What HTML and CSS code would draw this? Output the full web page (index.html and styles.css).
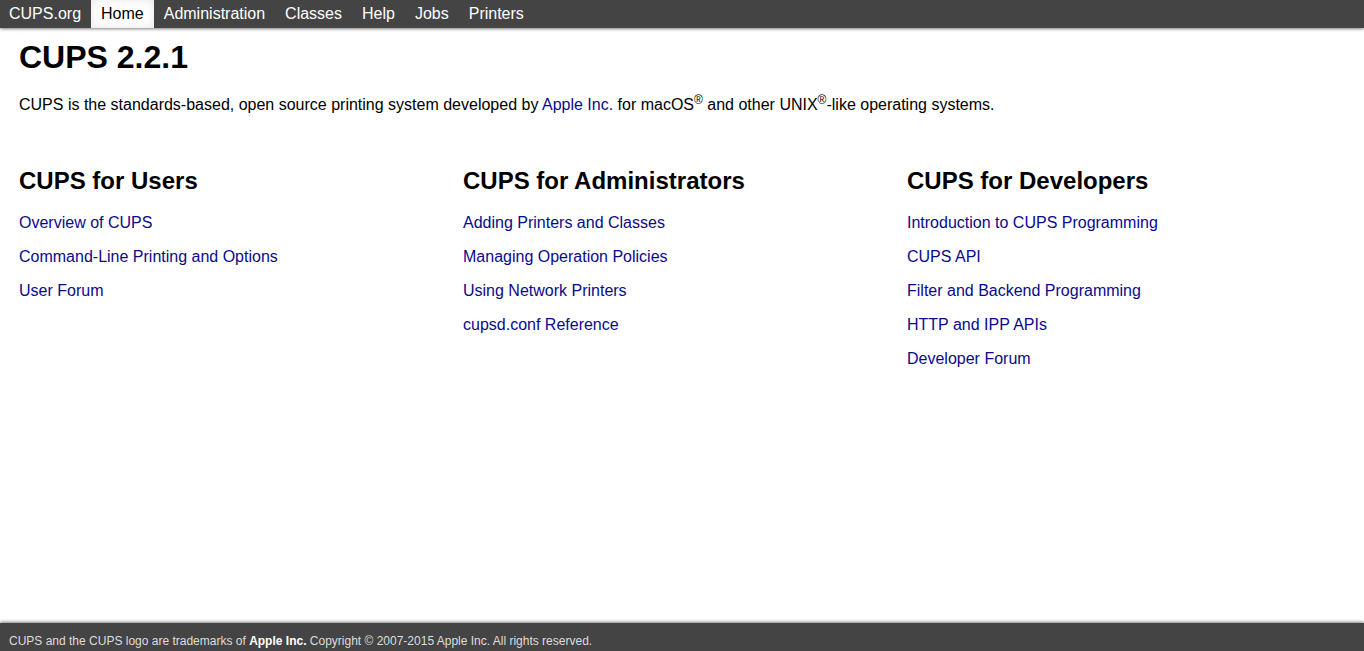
FILE: index.html
```html
<!DOCTYPE html>
<html lang="en">
<head>
  <meta charset="UTF-8" />
  <title>Home - CUPS 2.2.1</title>
  <link rel="stylesheet" href="styles.css">
</head>
<body>

  <div class="header">
    <ul>
      <li><a href="#">CUPS.org</a></li>
      <li><a class="active" href="#">Home</a></li>
      <li><a href="#">Administration</a></li>
      <li><a href="#">Classes</a></li>
      <li><a href="#">Help</a></li>
      <li><a href="#">Jobs</a></li>
      <li><a href="#">Printers</a></li>
    </ul>
  </div>

  <div class="body">
    <h1>CUPS 2.2.1</h1>
    <p class="intro">CUPS is the standards-based, open source printing system developed by <a href="#">Apple Inc.</a> for macOS<sup>&reg;</sup> and other UNIX<sup>&reg;</sup>-like operating systems.</p>

    <div class="row">
      <div class="col">
        <h2>CUPS for Users</h2>
        <p><a href="#">Overview of CUPS</a></p>
        <p><a href="#">Command-Line Printing and Options</a></p>
        <p><a href="#">User Forum</a></p>
      </div>
      <div class="col">
        <h2>CUPS for Administrators</h2>
        <p><a href="#">Adding Printers and Classes</a></p>
        <p><a href="#">Managing Operation Policies</a></p>
        <p><a href="#">Using Network Printers</a></p>
        <p><a href="#">cupsd.conf Reference</a></p>
      </div>
      <div class="col">
        <h2>CUPS for Developers</h2>
        <p><a href="#">Introduction to CUPS Programming</a></p>
        <p><a href="#">CUPS API</a></p>
        <p><a href="#">Filter and Backend Programming</a></p>
        <p><a href="#">HTTP and IPP APIs</a></p>
        <p><a href="#">Developer Forum</a></p>
      </div>
    </div>
  </div>

  <div class="footer">CUPS and the CUPS logo are trademarks of <a href="#">Apple Inc.</a> Copyright &copy; 2007-2015 Apple Inc. All rights reserved.</div>

</body>
</html>
```

FILE: styles.css
```css
/* Page */
html, body {
  margin: 0;
  padding: 0;
  height: 100%;
}
body {
  background: white;
  color: black;
  font-family: "Liberation Sans", Arial, sans-serif;
  font-size: 16px;
  display: flex;
  flex-direction: column;
}
a:link, a:visited {
  color: #0a0a8c;
  text-decoration: none;
}

/* Top navigation */
.header {
  background: #444;
  box-shadow: 0 1px 3px rgba(0,0,0,0.5);
  height: 28px;
  flex: none;
  position: relative;
  z-index: 10;
}
.header ul {
  list-style: none;
  margin: 0 0 0 -1px;
  padding: 0;
  display: flex;
}
.header a {
  display: block;
  padding: 4px 10px 5px;
  line-height: 19px;
}
.header a:link, .header a:visited {
  color: white;
}
.header a.active {
  background: white;
  box-shadow: rgba(0,0,0,0.1) 0 0 10px 0 inset;
  color: black;
}

/* Content */
.body {
  flex: 1;
  padding: 0 13px 0 19px;
}
h1 {
  font-size: 32px;
  margin: 11px 0 20px;
  line-height: 37px;
}
.intro {
  margin: 0;
  line-height: 18px;
}
sup {
  font-size: 12px;
  line-height: 0;
}
.row {
  display: grid;
  grid-template-columns: repeat(3, 1fr);
  margin-top: 53px;
}
h2 {
  font-size: 24px;
  line-height: 28px;
  margin: 0 0 19px;
}
.col p {
  margin: 0 0 16px;
  line-height: 18px;
}

/* Footer */
.footer {
  flex: none;
  background: #444;
  box-shadow: 0 -1px 3px rgba(0,0,0,0.5);
  color: #ddd;
  font-size: 12px;
  height: 28px;
  line-height: 16px;
  padding: 10px 9px 0;
  box-sizing: border-box;
}
.footer a:link, .footer a:visited {
  color: white;
  font-weight: bold;
}
```
